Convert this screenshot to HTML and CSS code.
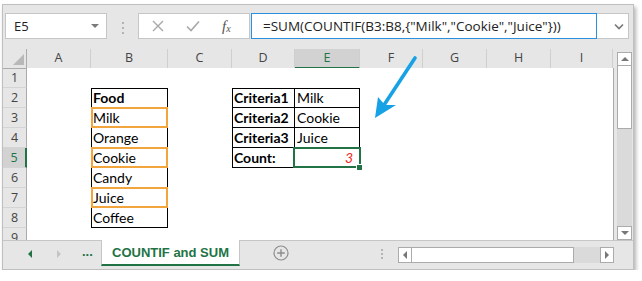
FILE: index.html
```html
<!DOCTYPE html>
<html>
<head>
<meta charset="utf-8">
<link rel="stylesheet" href="styles.css">
</head>
<body>
<div class="window">
  <div class="fbar">
    <div class="namebox"><span>E5</span><span class="dd"></span></div>
    <div class="grip"><i></i><i></i><i></i></div>
    <div class="fxbox">
      <svg class="ic-x" width="12" height="12" viewBox="0 0 12 12"><path d="M1 1L11 11M11 1L1 11" stroke="#a8a8a8" stroke-width="1.4" fill="none"/></svg>
      <svg class="ic-ok" width="14" height="12" viewBox="0 0 14 12"><path d="M1 6.5L5 10.5L13 1.5" stroke="#a8a8a8" stroke-width="1.6" fill="none"/></svg>
      <span class="fx"><i>f</i><sub>x</sub></span>
    </div>
    <div class="formula">=SUM(COUNTIF(B3:B8,{"Milk","Cookie","Juice"}))</div>
    <div class="expand"><svg width="10" height="7" viewBox="0 0 10 7"><path d="M1 1.5L5 5.5L9 1.5" stroke="#777" stroke-width="1.6" fill="none"/></svg></div>
  </div>
  <div class="main">
    <div class="sheet">
      <div class="colhead">
        <div class="hc corner"><span class="tri"></span></div>
        <div class="hc">A</div><div class="hc">B</div><div class="hc">C</div><div class="hc">D</div>
        <div class="hc selc">E</div><div class="hc">F</div><div class="hc">G</div><div class="hc">H</div><div class="hc">I</div>
      </div>
      <div class="grid">
        <div class="rh">1</div><i></i><i></i><i></i><i></i><i></i><i></i><i></i><i></i><i></i>

        <div class="rh">2</div><i></i><div class="c t l b">Food</div><i></i><div class="c t l b">Criteria1</div><div class="c t">Milk</div><i></i><i></i><i></i><i></i>

        <div class="rh">3</div><i></i><div class="c l hl">Milk</div><i></i><div class="c l b">Criteria2</div><div class="c">Cookie</div><i></i><i></i><i></i><i></i>

        <div class="rh">4</div><i></i><div class="c l">Orange</div><i></i><div class="c l b">Criteria3</div><div class="c">Juice</div><i></i><i></i><i></i><i></i>

        <div class="rh selr">5</div><i></i><div class="c l hl">Cookie</div><i></i><div class="c l b">Count:</div><div class="c active num">3</div><i></i><i></i><i></i><i></i>

        <div class="rh">6</div><i></i><div class="c l">Candy</div><i></i><i></i><i></i><i></i><i></i><i></i><i></i>

        <div class="rh">7</div><i></i><div class="c l hl">Juice</div><i></i><i></i><i></i><i></i><i></i><i></i><i></i>

        <div class="rh">8</div><i></i><div class="c l">Coffee</div><i></i><i></i><i></i><i></i><i></i><i></i><i></i>

        <div class="rh">9</div><i></i><i></i><i></i><i></i><i></i><i></i><i></i><i></i><i></i>
      </div>
    </div>
    <div class="vscroll">
      <div class="vbtn"><span class="up"></span></div>
      <div class="vthumb"></div>
      <div class="vtrack"></div>
      <div class="vbtn"><span class="down"></span></div>
    </div>
  </div>
  <div class="tabbar">
    <div class="nav">
      <span class="tl"></span>
      <span class="tr"></span>
      <span class="ell">...</span>
    </div>
    <div class="tab">COUNTIF and SUM</div>
    <div class="rest">
      <svg class="plus" width="16" height="16" viewBox="0 0 16 16"><circle cx="8" cy="8" r="7" stroke="#8c8c8c" stroke-width="1.2" fill="none"/><path d="M8 4.2V11.8M4.2 8H11.8" stroke="#8c8c8c" stroke-width="1.4"/></svg>
      <div class="grip2"><i></i><i></i><i></i></div>
      <div class="hscroll">
        <div class="hbtn"><span class="lt"></span></div>
        <div class="hthumb"></div>
        <div class="htrack"></div>
        <div class="hbtn"><span class="rt"></span></div>
      </div>
    </div>
  </div>
</div>
<svg class="arrow" width="70" height="80" viewBox="0 0 70 80">
  <path d="M55 8L24 55" stroke="#17a2e5" stroke-width="3.6" fill="none" stroke-linecap="round"/>
  <path d="M15 68L18 47L25 55L36 55Z" fill="#17a2e5"/>
</svg>
</body>
</html>
```
FILE: styles.css
```css
body {
  margin: 0;
  background: #fff;
  font-family: "Open Sans", "Liberation Sans", sans-serif;
}
.window {
  position: relative;
  margin: 4px 0 0 2px;
  width: 632px;
  height: 266px;
  box-sizing: border-box;
  border: 1px solid #bfbfbf;
  background: #e6e6e6;
  box-shadow: 2px 3px 4px rgba(0, 0, 0, 0.3);
  display: flex;
  flex-direction: column;
  overflow: hidden;
}
.fbar {
  height: 44px;
  box-sizing: border-box;
  padding-top: 8px;
  display: flex;
  align-items: flex-start;
}
.namebox {
  margin-left: 2px;
  width: 102px;
  height: 26px;
  box-sizing: border-box;
  background: #fff;
  border: 1px solid #c6c6c6;
  display: flex;
  align-items: center;
  padding-left: 8px;
  font-size: 13px;
  color: #222;
}
.dd {
  margin-left: auto;
  margin-right: 7px;
  border-left: 4px solid transparent;
  border-right: 4px solid transparent;
  border-top: 4px solid #7a7a7a;
}
.grip {
  width: 2px;
  margin: 9px 14px 0 15px;
  display: flex;
  flex-direction: column;
  gap: 3px;
}
.grip i, .grip2 i {
  display: block;
  width: 2px;
  height: 2px;
  background: #b4b4b4;
}
.fxbox {
  width: 112px;
  height: 26px;
  box-sizing: border-box;
  background: #fff;
  border: 1px solid #c6c6c6;
  display: flex;
  align-items: center;
}
.ic-x { margin-left: 13px; }
.ic-ok { margin-left: 22px; }
.fx {
  margin-left: 22px;
  font-family: "Liberation Serif", serif;
  font-style: italic;
  font-size: 15px;
  color: #555;
}
.fx sub { font-size: 10px; vertical-align: -1px; }
.formula {
  margin-left: 1px;
  width: 346px;
  height: 26px;
  box-sizing: border-box;
  background: #fff;
  border: 1px solid #2b8fde;
  padding-left: 11px;
  display: flex;
  align-items: center;
  font-size: 13.5px;
  color: #222;
  white-space: nowrap;
}
.expand {
  width: 32px;
  height: 26px;
  box-sizing: border-box;
  background: #fff;
  border: 1px solid #c6c6c6;
  border-left: none;
  display: flex;
  align-items: center;
  justify-content: flex-end;
  padding-right: 4px;
}
.main {
  height: 191px;
  display: flex;
}
.sheet {
  width: 611px;
  display: flex;
  flex-direction: column;
}
.colhead, .grid {
  display: grid;
  grid-template-columns: 24px 64px 77px 64px 63px 65px 63px 64px 64px 62px;
}
.colhead { height: 19px; }
.hc {
  box-sizing: border-box;
  border-right: 1px solid #cfcfcf;
  border-bottom: 1px solid #ababab;
  text-align: center;
  font-size: 12.5px;
  line-height: 18px;
  color: #444;
}
.corner { position: relative; border-right-color: #ababab; }
.tri {
  position: absolute;
  right: 2px;
  bottom: 3px;
  width: 0;
  height: 0;
  border-left: 11px solid transparent;
  border-bottom: 11px solid #b8b8b8;
}
.selc {
  background: #d2d2d2;
  border-bottom: 2px solid #217346;
  color: #217346;
}
.grid {
  height: 172px;
  grid-auto-rows: 20px;
  overflow: hidden;
  background: #fff;
  border-right: 1px solid #ababab;
  font-family: Lato, "Liberation Sans", sans-serif;
  font-size: 14px;
  color: #000;
}
.rh {
  box-sizing: border-box;
  background: #e6e6e6;
  border-right: 1px solid #ababab;
  border-bottom: 1px solid #d4d4d4;
  font-family: "Open Sans", sans-serif;
  font-size: 12.5px;
  line-height: 19px;
  text-align: center;
  color: #444;
}
.selr {
  background: #d2d2d2;
  border-right: 2px solid #217346;
  color: #217346;
}
.c {
  position: relative;
  box-sizing: border-box;
  border-right: 1px solid #000;
  border-bottom: 1px solid #000;
  padding: 1px 0 0 2px;
  line-height: 18px;
  white-space: nowrap;
}
.c.t { border-top: 1px solid #000; padding-top: 0; }
.c.l { border-left: 1px solid #000; padding-left: 1px; }
.c.b { font-weight: bold; }
.hl::after {
  content: "";
  position: absolute;
  left: -1px;
  top: -1px;
  right: -1px;
  bottom: -1px;
  border: 2px solid #f2a53c;
}
.num {
  text-align: right;
  padding-right: 6px;
  font-style: italic;
  color: #ee2a24;
}
.active::after {
  content: "";
  position: absolute;
  left: -2px;
  top: -1px;
  right: -2px;
  bottom: -1px;
  border: 2px solid #217346;
}
.active::before {
  content: "";
  position: absolute;
  right: -4px;
  bottom: -4px;
  width: 5px;
  height: 5px;
  background: #217346;
  border: 1px solid #fff;
  z-index: 2;
}
.vscroll {
  width: 19px;
  box-sizing: border-box;
  padding: 3px 0 0 3px;
  display: flex;
  flex-direction: column;
}
.vbtn {
  width: 15px;
  height: 14px;
  box-sizing: border-box;
  background: #fff;
  border: 1px solid #ababab;
  display: flex;
  align-items: center;
  justify-content: center;
}
.up, .down {
  border-left: 4px solid transparent;
  border-right: 4px solid transparent;
}
.up { border-bottom: 4px solid #777; }
.down { border-top: 4px solid #777; }
.vthumb {
  width: 15px;
  height: 63px;
  box-sizing: border-box;
  background: #fff;
  border: 1px solid #ababab;
  border-top: none;
}
.vtrack {
  flex: 1;
  width: 15px;
  background: #dadada;
}
.tabbar {
  height: 29px;
  display: flex;
  align-items: flex-start;
}
.nav {
  width: 98px;
  height: 29px;
  box-sizing: border-box;
  border-top: 1px solid #c6c6c6;
  display: flex;
  align-items: flex-start;
  padding-top: 9px;
}
.tl {
  margin-left: 25px;
  border-top: 4px solid transparent;
  border-bottom: 4px solid transparent;
  border-right: 4px solid #217346;
}
.tr {
  margin-left: 25px;
  border-top: 4px solid transparent;
  border-bottom: 4px solid transparent;
  border-left: 4px solid #c4c4c4;
}
.ell {
  margin-left: 21px;
  margin-top: -6px;
  font-family: "Liberation Sans", sans-serif;
  font-weight: bold;
  font-size: 13px;
  color: #217346;
}
.tab {
  width: 139px;
  height: 26px;
  box-sizing: border-box;
  background: #fff;
  border-left: 1px solid #c6c6c6;
  border-right: 1px solid #c6c6c6;
  border-bottom: 2px solid #217346;
  text-align: center;
  font-family: "Liberation Sans", sans-serif;
  font-weight: bold;
  font-size: 13px;
  line-height: 25px;
  color: #217346;
  white-space: nowrap;
}
.rest {
  flex: 1;
  height: 29px;
  box-sizing: border-box;
  border-top: 1px solid #c6c6c6;
  display: flex;
  align-items: flex-start;
}
.plus { margin: 4px 0 0 33px; }
.grip2 {
  margin: 8px 0 0 92px;
  display: flex;
  flex-direction: column;
  gap: 2px;
}
.hscroll {
  margin: 6px 0 0 15px;
  width: 216px;
  height: 16px;
  display: flex;
}
.hbtn {
  width: 14px;
  height: 16px;
  box-sizing: border-box;
  background: #fff;
  border: 1px solid #ababab;
  display: flex;
  align-items: center;
  justify-content: center;
}
.lt, .rt {
  border-top: 4px solid transparent;
  border-bottom: 4px solid transparent;
}
.lt { border-right: 4px solid #777; }
.rt { border-left: 4px solid #777; }
.hthumb {
  width: 162px;
  height: 16px;
  box-sizing: border-box;
  background: #fff;
  border: 1px solid #ababab;
  border-left: none;
}
.htrack {
  flex: 1;
  background: #dadada;
}
.arrow {
  position: absolute;
  left: 360px;
  top: 50px;
}
```
